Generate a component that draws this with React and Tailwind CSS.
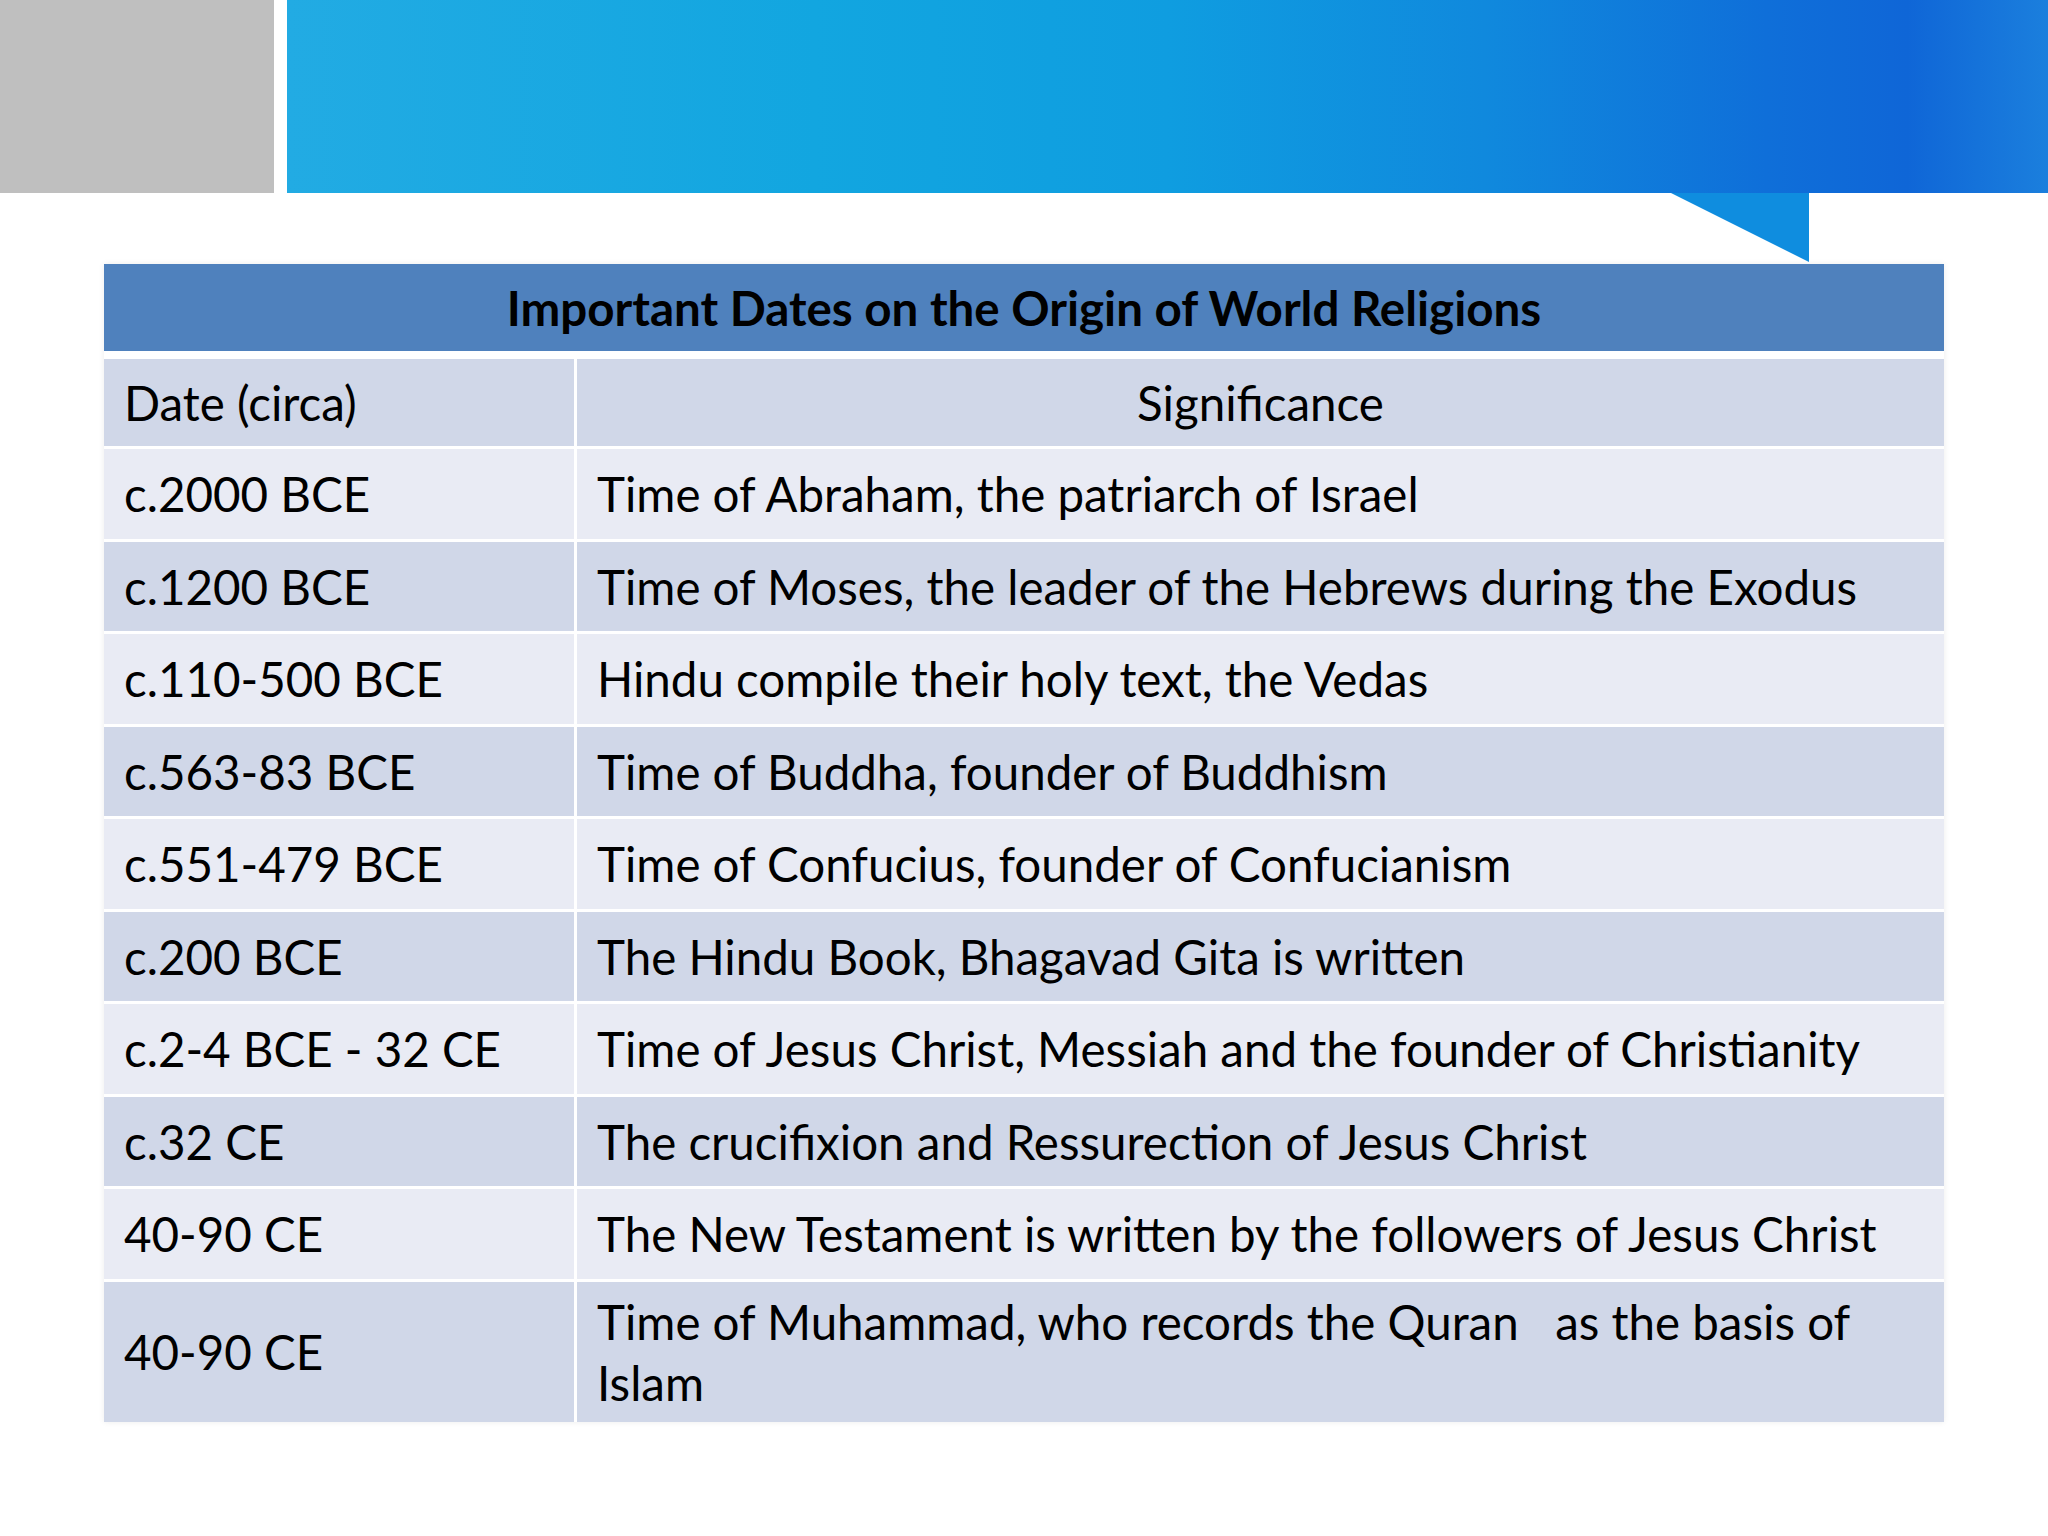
const ROWS = [
  ["c.2000 BCE", "Time of Abraham, the patriarch of Israel"],
  ["c.1200 BCE", "Time of Moses, the leader of the Hebrews during the Exodus"],
  ["c.110-500 BCE", "Hindu compile their holy text, the Vedas"],
  ["c.563-83 BCE", "Time of Buddha, founder of Buddhism"],
  ["c.551-479 BCE", "Time of Confucius, founder of Confucianism"],
  ["c.200 BCE", "The Hindu Book, Bhagavad Gita is written"],
  ["c.2-4 BCE - 32 CE", "Time of Jesus Christ, Messiah and the founder of Christianity"],
  ["c.32 CE", "The crucifixion and Ressurection of Jesus Christ"],
  ["40-90 CE", "The New Testament is written by the followers of Jesus Christ"],
];

function Row({ date, children, light, tall }) {
  const bg = light ? "bg-[#e9ebf4]" : "bg-[#d0d7e8]";
  const h = tall ? "h-[140px]" : "h-[89.5px]";
  return (
    <div className={`flex gap-[3px] ${h}`}>
      <div className={`${bg} w-[470px] flex items-center pl-[20px]`}>{date}</div>
      <div className={`${bg} flex-1 flex items-center pl-[20px] leading-[61px]`}>{children}</div>
    </div>
  );
}

export default function App() {
  return (
    <div
      className="w-[2048px] h-[1536px] bg-white overflow-hidden text-black"
      style={{ fontFamily: "Lato, 'Open Sans', sans-serif" }}
    >
      <div className="flex gap-[13px] h-[193px]">
        <div className="w-[274px] h-full bg-[#bfbfbf]" />
        <div className="relative flex-1 h-full bg-[linear-gradient(90deg,#22abe3_0%,#12a6e0_30%,#0f9de0_50%,#1089dd_68%,#0f6fd9_84%,#0f66d7_92%,#1b7fdd_100%)]">
          <svg
            className="absolute left-[1384px] top-[193px]"
            width="138"
            height="69"
            viewBox="0 0 138 69"
          >
            <polygon points="0,0 138,0 138,69" fill="#0f8ddf" />
          </svg>
        </div>
      </div>

      <div className="ml-[104px] mt-[71px] w-[1840px] shadow-[0_0_6px_rgba(0,0,0,0.08)]">
        <div className="h-[87px] bg-[#4f81bd] flex items-center justify-center text-[47.5px] font-bold">
          Important Dates on the Origin of World Religions
        </div>
        <div className="mt-[8px] flex flex-col gap-[3px] text-[47.5px]">
          <div className="flex gap-[3px] h-[87px]">
            <div className="bg-[#d0d7e8] w-[470px] flex items-center pl-[20px]">Date (circa)</div>
            <div className="bg-[#d0d7e8] flex-1 flex items-center justify-center">Significance</div>
          </div>
          {ROWS.map(([d, s], i) => (
            <Row key={i} date={d} light={i % 2 === 0}>
              {s}
            </Row>
          ))}
          <Row date="40-90 CE" tall>
            <span className="whitespace-pre">
              {"Time of Muhammad, who records the Quran   as the basis of"}
              <br />
              Islam
            </span>
          </Row>
        </div>
      </div>
    </div>
  );
}
